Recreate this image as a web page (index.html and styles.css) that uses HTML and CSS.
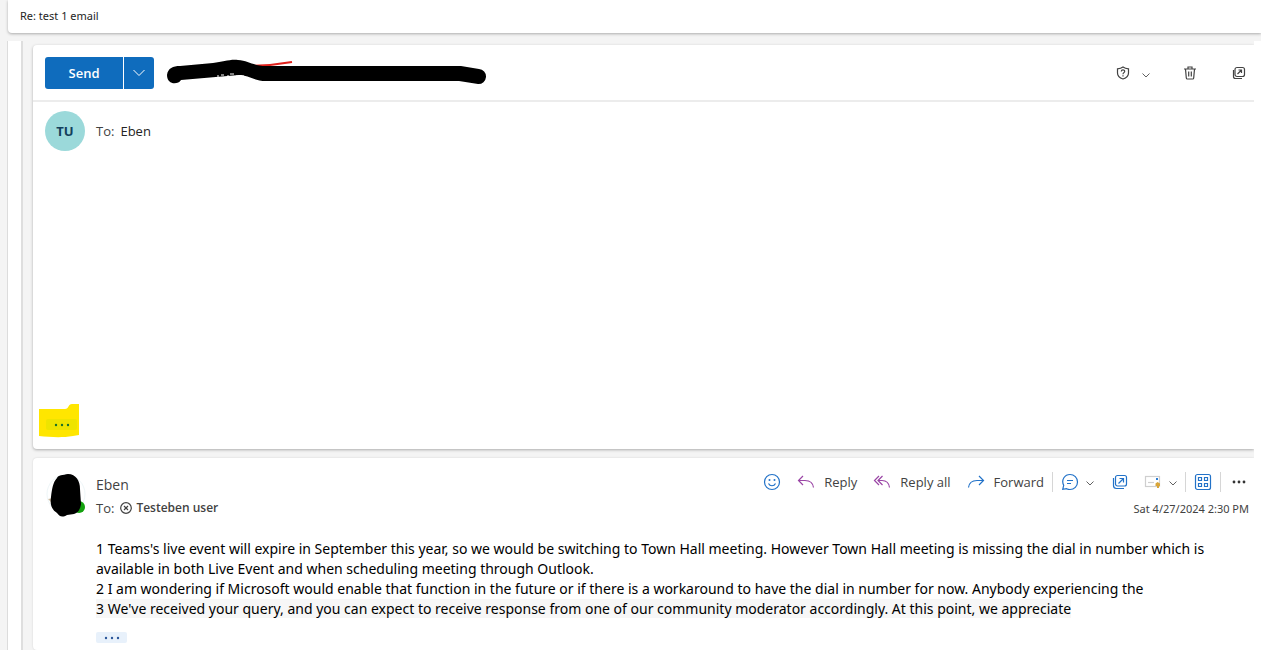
FILE: index.html
```html
<!DOCTYPE html>
<html lang="en">
<head>
    <meta charset="UTF-8">
    <meta name="viewport" content="width=device-width, initial-scale=1.0">
    <title>Re: test 1 email</title>
    <link rel="stylesheet" href="styles.css">
</head>
<body>
    <header class="subject-bar">
        <h1 class="subject">Re: test 1 email</h1>
    </header>

    <div class="workspace">
        <div class="list-edge"></div>

        <main class="reading-pane">
            <!-- Draft reply -->
            <section class="card compose">
                <div class="compose-bar">
                    <div class="send-group">
                        <button class="send">Send</button>
                        <button class="send-more" aria-label="More send options">
                            <svg width="14" height="8" viewBox="0 0 14 8"><path d="M1.500 1L7 6.500 12.500 1"/></svg>
                        </button>
                    </div>
                    <svg class="scribble" width="324" height="30" viewBox="0 0 324 30">
                        <path class="red-line" d="M80 8c15 0 32-1 49-4"/>
                        <path d="M4 17C5 10 10 8 17 8L50 5C60 4 67 1 75 2C86 3 91 8 103 8H298L316 11A7.500 7.500 0 0 1 315 26L296 23H103C91 23 85 17 76 17L18 22C15 27 4 27 4 17z"/>
                        <path class="specks" d="M54 18h2M58 17h3M64 18h2M67 16h4M73 18h3M78 18h3"/>
                    </svg>
                    <div class="compose-tools">
                        <button class="tool shield" aria-label="Sensitivity">
                            <svg width="14" height="14" viewBox="0 0 14 14"><path d="M7 1C9 2.500 10.500 2.700 12.500 2.800V7c0 3-2 5-5.500 6C3.500 12 1.500 10 1.500 7V2.800C3.500 2.700 5 2.500 7 1z"/><path d="M5.300 5.500C5.300 3.300 8.700 3.300 8.700 5.300 8.700 6.600 7 6.700 7 8.200M7 9.300v1.300"/></svg>
                        </button>
                        <button class="tool chevron" aria-label="More sensitivity options">
                            <svg width="8" height="5" viewBox="0 0 8 5"><path d="M.5.5L4 4 7.500.5"/></svg>
                        </button>
                        <button class="tool trash" aria-label="Discard">
                            <svg width="14" height="14" viewBox="0 0 14 14"><path d="M1 3h12M5 3V1h4v2M2.500 3l.8 9c.1.600.4 1 1 1h5.400c.6 0 .9-.4 1-1l.8-9M5.700 5.500v5M8.300 5.500v5"/></svg>
                        </button>
                        <button class="tool" aria-label="Open in new window">
                            <svg width="14" height="14" viewBox="0 0 14 14"><rect x="3" y="1.500" width="9.500" height="9" rx="2"/><path d="M1.500 4v6.500c0 1.500 1 2 2 2H10M5.500 8l4-4M6.500 4h3v3"/></svg>
                        </button>
                    </div>
                </div>
                <div class="recipient-row">
                    <span class="avatar">TU</span>
                    <span class="to-label">To:</span>
                    <span class="to-name">Eben</span>
                </div>
                <div class="draft-body">
                    <div class="highlight">
                        <svg class="marker" width="41" height="35" viewBox="0 0 41 35"><path d="M0 6h26c4 0 3-5 7-5h7v31l-6 1c-12 2-23 1-34 0z"/></svg>
                        <button class="expand expand-draft" aria-label="Show trimmed content">
                            <svg width="16" height="4" viewBox="0 0 16 4"><circle cx="2" cy="2" r="1.200"/><circle cx="8" cy="2" r="1.200"/><circle cx="14" cy="2" r="1.200"/></svg>
                        </button>
                    </div>
                </div>
            </section>

            <!-- Received message -->
            <article class="card message">
                <div class="message-head">
                    <svg class="photo" width="40" height="48" viewBox="0 0 40 48">
                        <circle class="photo-ring" cx="20" cy="23" r="19"/>
                        <path class="photo-skin" d="M2 28l6-1v7z"/>
                        <circle class="presence" cx="33" cy="36" r="6"/>
                        <path d="M11 7C12 4 17 4 22 3C30 3 34 10 34 18L35 33C34 40 31 42 28 43L21 44C16 47 13 45 11 42C5 38 4 33 5 26C6 18 7 11 11 7z"/>
                    </svg>
                    <div class="sender">
                        <div class="sender-name">Eben</div>
                        <div class="sender-to">
                            <span>To:</span>
                            <svg width="12" height="12" viewBox="0 0 12 12"><circle cx="6" cy="6" r="5.300"/><path d="M4 4l4 4M8 4L4 8"/></svg>
                            <span class="sender-user">Testeben user</span>
                        </div>
                    </div>
                    <div class="message-side">
                        <div class="actions">
                            <button class="action blue" aria-label="React">
                                <svg width="18" height="18" viewBox="0 0 18 18"><circle cx="9" cy="9" r="7.500"/><path d="M5.500 10.500c1.500 3 5.500 3 7 0"/><circle class="dot" cx="6.500" cy="7" r="1"/><circle class="dot" cx="11.500" cy="7" r="1"/></svg>
                            </button>
                            <button class="action purple">
                                <svg width="18" height="16" viewBox="0 0 18 16"><path d="M6 2L1.500 6.500 6 11M1.500 6.500H8c5 0 8 3 8.500 7"/></svg>
                                Reply
                            </button>
                            <button class="action purple">
                                <svg width="18" height="16" viewBox="0 0 18 16"><path d="M6 2L1.500 6.500 6 11M9.500 2L5 6.500 9.500 11M5 6.500h4c5 0 7 3 7.500 7"/></svg>
                                Reply all
                            </button>
                            <button class="action blue">
                                <svg width="18" height="16" viewBox="0 0 18 16"><path d="M12 2l4.500 4.500L12 11M16.500 6.500H10c-5 0-8 3-8.500 7"/></svg>
                                Forward
                            </button>
                            <span class="divider"></span>
                            <button class="action blue split" aria-label="Chat">
                                <svg width="18" height="18" viewBox="0 0 18 18"><path d="M1.700 16.300l1-4C-.2 6.500 4 1.500 9 1.500c4.200 0 7.500 3.300 7.500 7.500s-3.300 7.500-7.500 7.500c-1.300 0-2.400-.3-3.400-.8zM6 7.500h6M6 10.500h4"/></svg>
                                <svg class="caret" width="8" height="5" viewBox="0 0 8 5"><path d="M.5.5L4 4 7.500.5"/></svg>
                            </button>
                            <button class="action blue popout" aria-label="Open in new window">
                                <svg width="16" height="16" viewBox="0 0 16 16"><rect x="3.500" y="1.500" width="11" height="10.500" rx="2"/><path d="M1.500 4v7.500c0 2 1 3 3 3H12M6.500 9.500l5-5M7.500 4.500h4v4"/></svg>
                            </button>
                            <button class="action split" aria-label="Encryption">
                                <svg width="18" height="14" viewBox="0 0 18 14"><rect class="card-line" x="1.500" y="1.500" width="14" height="10"/><path class="card-line" d="M4 7.500h6"/><path class="stamp" d="M12 4h2"/><path class="lock" d="M11.500 8.500l2-1.500 2.500 1.500v2.500h-1v2h-2v-2h-1.500z"/></svg>
                                <svg class="caret" width="8" height="5" viewBox="0 0 8 5"><path d="M.5.5L4 4 7.500.5"/></svg>
                            </button>
                            <span class="divider"></span>
                            <button class="action blue" aria-label="Apps">
                                <svg width="18" height="18" viewBox="0 0 18 18"><rect x="1.500" y="1.500" width="15" height="15" rx="2"/><path d="M4.500 4.500h3v3h-3zM10.500 4.500h3v3h-3zM4.500 10.500h3v3h-3zM10.500 10.500h3v3h-3z"/></svg>
                            </button>
                            <span class="divider"></span>
                            <button class="action more" aria-label="More actions">
                                <svg width="14" height="4" viewBox="0 0 14 4"><circle cx="2" cy="2" r="1.400"/><circle cx="7" cy="2" r="1.400"/><circle cx="12" cy="2" r="1.400"/></svg>
                            </button>
                        </div>
                        <time class="date" datetime="2024-04-27T14:30">Sat 4/27/2024 2:30 PM</time>
                    </div>
                </div>
                <div class="message-body">
                    <p>1 Teams's live event will expire in September this year, so we would be switching to Town Hall meeting. However Town Hall meeting is missing the dial in number which is available in both Live Event and when scheduling meeting through Outlook.</p>
                    <p>2 I am wondering if Microsoft would enable that function in the future or if there is a workaround to have the dial in number for now. Anybody experiencing the</p>
                    <p><span class="shaded">3 We've received your query, and you can expect to receive response from one of our community moderator accordingly. At this point, we appreciate</span></p>
                    <button class="expand" aria-label="Show trimmed content">
                        <svg width="16" height="4" viewBox="0 0 16 4"><circle cx="2" cy="2" r="1.200"/><circle cx="8" cy="2" r="1.200"/><circle cx="14" cy="2" r="1.200"/></svg>
                    </button>
                </div>
            </article>
        </main>
    </div>
</body>
</html>
```
FILE: styles.css
```css
* {
    box-sizing: border-box;
}

body {
    margin: 0;
    height: 100vh;
    display: flex;
    flex-direction: column;
    overflow: hidden;
    background: #f4f4f4;
    color: #424242;
    font-family: "Segoe UI", "Open Sans", sans-serif;
    font-size: 13px;
}

h1, p {
    margin: 0;
}

button {
    margin: 0;
    padding: 0;
    border: none;
    background: none;
    color: inherit;
    font: inherit;
    cursor: pointer;
}

svg {
    display: block;
    flex-shrink: 0;
}

.subject-bar {
    flex-shrink: 0;
    margin-left: 8px;
    height: 33px;
    padding: 0 12px;
    background: #fff;
    border-bottom-left-radius: 4px;
    box-shadow: 0 1px 3px rgba(0, 0, 0, 0.3);
}

.subject {
    color: #242424;
    font-family: "Segoe UI", "Noto Sans", sans-serif;
    font-size: 11px;
    font-weight: 400;
    line-height: 32px;
}

.workspace {
    flex: 1;
    min-height: 0;
    margin-top: 8px;
    padding-left: 7px;
    display: flex;
}

.list-edge {
    width: 16px;
    background: #fff;
    border-left: 1px solid #dcdcdc;
    border-right: 2px solid #dedede;
}

.reading-pane {
    flex: 1;
    min-width: 0;
    padding: 4px 0 0 10px;
    display: flex;
    flex-direction: column;
    gap: 9px;
    border-right: 7px solid #fff;
}

.card {
    background: #fff;
    border-radius: 4px 0 0 4px;
    box-shadow: 0 0 2px rgba(0, 0, 0, 0.15);
    clip-path: inset(-4px 0 -4px -4px);
}

/* Draft */
.compose {
    height: 404px;
    flex-shrink: 0;
    display: flex;
    flex-direction: column;
    box-shadow: 0 1px 3px rgba(0, 0, 0, 0.3);
}

.compose-bar {
    height: 57px;
    padding: 1px 8px 0 12px;
    display: flex;
    align-items: center;
    border-bottom: 2px solid #ececec;
}

.send-group {
    height: 32px;
    display: flex;
    gap: 1px;
}

.send,
.send-more {
    background: #0f6cbd;
    color: #fff;
}

.send {
    width: 78px;
    border-radius: 3px 0 0 3px;
    font-weight: 600;
}

.send-more {
    width: 30px;
    display: flex;
    align-items: center;
    justify-content: center;
    border-radius: 0 3px 3px 0;
}

.send-more svg,
.tool svg,
.action svg,
.sender-to svg {
    fill: none;
    stroke: currentColor;
    stroke-width: 1.2;
}

.send-more svg,
.chevron svg,
.action .caret {
    stroke-width: 1;
}

.scribble {
    margin-left: 9px;
}

.scribble .red-line {
    fill: none;
    stroke: #e0201b;
    stroke-width: 2;
}

.scribble .specks {
    fill: none;
    stroke: #fff;
}

.compose-tools {
    margin-left: auto;
    display: flex;
    align-items: center;
}

.shield {
    margin-right: 12px;
}

.chevron {
    margin-right: 33px;
    padding-top: 4px;
    color: #616161;
}

.trash {
    margin-right: 35px;
}

.recipient-row {
    padding: 8px 12px 0;
    display: flex;
    align-items: center;
    line-height: 42px;
}

.avatar {
    width: 40px;
    height: 40px;
    margin-right: 11px;
    border-radius: 50%;
    background: #9bd9da;
    color: #12405c;
    font-weight: 700;
    line-height: 40px;
    text-align: center;
}

.to-label {
    margin-right: 6px;
}

.to-name {
    color: #242424;
}

.draft-body {
    flex: 1;
    padding: 0 6px 11px;
    display: flex;
    align-items: flex-end;
}

.highlight {
    display: grid;
    align-items: center;
    justify-items: center;
}

.highlight > * {
    grid-area: 1 / 1;
}

.marker {
    fill: #ffe600;
}

/* Message */
.message {
    flex: 1;
    padding: 13px 5px 0 13px;
}

.message-head {
    display: flex;
    align-items: flex-start;
}

.photo {
    margin-right: 10px;
}

.photo-ring {
    fill: #fff;
    stroke: #eef6f8;
}

.photo-skin {
    fill: #cdb99c;
}

.presence {
    fill: #13a10e;
}

.sender-name {
    padding-top: 2px;
    font-size: 14px;
    line-height: 24px;
}

.sender-to {
    display: flex;
    align-items: center;
    gap: 4px;
    line-height: 22px;
}

.sender-to svg {
    margin-left: 2px;
}

.sender-user {
    font-size: 12px;
    font-weight: 600;
}

.message-side {
    margin-left: auto;
    display: flex;
    flex-direction: column;
    align-items: flex-end;
}

.actions {
    display: flex;
    align-items: center;
    height: 22px;
    gap: 16px;
}

.action {
    display: flex;
    align-items: center;
    gap: 9px;
}

.blue svg {
    color: #2272c8;
}

.purple svg {
    color: #9a45a5;
}

.action .dot {
    fill: currentColor;
    stroke: none;
}

.action.split {
    gap: 7px;
}

.action .caret {
    color: #616161;
    margin-top: 3px;
}

.action.popout {
    margin-left: 2px;
}

.divider {
    width: 1px;
    height: 20px;
    margin: 0 -8px;
    background: #d6d6d6;
}

.action .card-line {
    stroke: #cfcfcf;
}

.action .stamp {
    stroke: #2b7cd3;
    stroke-width: 2;
}

.action .lock {
    fill: #d8a53a;
    stroke: none;
}

.action.more {
    margin: 0 3px;
}

.action.more svg {
    fill: #333;
    stroke: none;
}

.date {
    font-family: "Segoe UI", "Noto Sans", sans-serif;
    font-size: 11px;
    line-height: 32px;
}

.message-body {
    padding: 14px 24px 0 50px;
    color: #000;
    font-family: "Segoe UI", "Noto Sans", sans-serif;
    font-size: 14px;
    line-height: 20px;
}

.shaded {
    background: #f7f7f7;
}

.expand {
    width: 31px;
    height: 11px;
    margin-top: 13px;
    display: flex;
    align-items: center;
    justify-content: center;
    background: #e8f1fb;
    border-radius: 2px;
    fill: #2b579a;
}

.expand-draft {
    margin: 8px 0 0 4px;
    background: #eee400;
    fill: #17702b;
}
```
